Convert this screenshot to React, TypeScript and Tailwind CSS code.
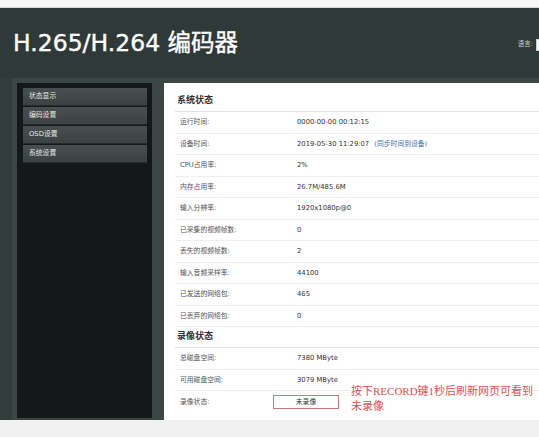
import React from "react";

const font = { fontFamily: '"DejaVu Sans", "Noto Sans CJK SC", sans-serif' };

const sysRows: [string, React.ReactNode][] = [
  ["运行时间:", "0000-00-00 00:12:15"],
  [
    "设备时间:",
    <>
      2019-05-30 11:29:07 <span className="text-[#3f6fae] ml-[3px]">(同步时间到设备)</span>
    </>,
  ],
  ["CPU占用率:", "2%"],
  ["内存占用率:", "26.7M/485.6M"],
  ["输入分辨率:", "1920x1080p@0"],
  ["已采集的视频帧数:", "0"],
  ["丢失的视频帧数:", "2"],
  ["输入音频采样率:", "44100"],
  ["已发送的网络包:", "465"],
  ["已丢弃的网络包:", "0"],
];

const menu = ["状态显示", "编码设置", "OSD设置", "系统设置"];

function Row({ label, value }: { label: string; value: React.ReactNode }) {
  return (
    <div className="flex items-center h-[21.5px] border-b border-[#efefef] pl-[5px] text-[6.8px]">
      <div className="w-[117px] text-[#555]">{label}</div>
      <div className="text-[#333] whitespace-nowrap">{value}</div>
    </div>
  );
}

function Heading({ children }: { children: React.ReactNode }) {
  return (
    <div className="flex items-center h-[21px] border-b border-[#e2e2e2] pl-[2px] text-[9px] font-bold text-[#333]">
      {children}
    </div>
  );
}

export default function App() {
  return (
    <div className="w-[539px] h-[437px] overflow-hidden bg-[#f1f1f1] relative" style={font}>
      <div className="h-[8px] bg-[#f7f7f7] border-b border-[#d8d8d8]" />
      <div className="h-[70px] bg-[#2f3a38] flex items-center justify-between pl-[13px]">
        <div
          className="text-white text-[23.5px] font-normal leading-none pt-[1px]"
          style={{ WebkitTextStroke: "0.4px white" }}
        >
          H.265/H.264 编码器
        </div>
        <div className="flex items-center gap-[3px] pt-[4px]">
          <span className="text-[#c9cccb] text-[6.5px]">语言:</span>
          <div className="w-[3px] h-[12px] border border-r-0 border-[#d0d0d0] bg-[#f4f4f4]" />
        </div>
      </div>
      <div className="flex h-[342px] bg-[#333d3b]">
        <div className="w-[12px]" />
        <div className="flex flex-1 bg-[#3c4644] pt-[5px]">
          <div className="w-[135px] ml-[5px] mb-[2px] bg-[#141819] pt-[5px] pl-[6px] pr-[5px] flex flex-col gap-[1px]">
            {menu.map((m) => (
              <div
                key={m}
                className="h-[18px] flex items-center pl-[6px] text-[6.8px] text-[#e6e8e7] bg-gradient-to-b from-[#47504e] to-[#3a4341] border-b border-[#262c2b]"
              >
                {m}
              </div>
            ))}
          </div>
          <div className="ml-[12px] flex-1 bg-white pt-[8px] pl-[11px] relative">
            <Heading>系统状态</Heading>
            {sysRows.map(([l, v]) => (
              <Row key={l} label={l} value={v} />
            ))}
            <Heading>录像状态</Heading>
            <Row label="总磁盘空间:" value="7380 MByte" />
            <Row label="可用磁盘空间:" value="3079 MByte" />
            <div className="flex items-center h-[21.5px] pl-[5px] text-[6.8px]">
              <div className="w-[93px] text-[#555]">录像状态:</div>
              <div className="w-[66px] h-[14px] border border-[#c97a7a] flex items-center justify-center text-[#333]">
                未录像
              </div>
            </div>
            <div
              className="absolute left-[187px] top-[301px] text-[11px] leading-[15px] text-[#d95353]"
              style={{ fontFamily: '"Liberation Serif", "Noto Sans CJK SC", serif' }}
            >
              按下RECORD键1秒后刷新网页可看到
              <br />
              未录像
            </div>
          </div>
        </div>
      </div>
    </div>
  );
}
